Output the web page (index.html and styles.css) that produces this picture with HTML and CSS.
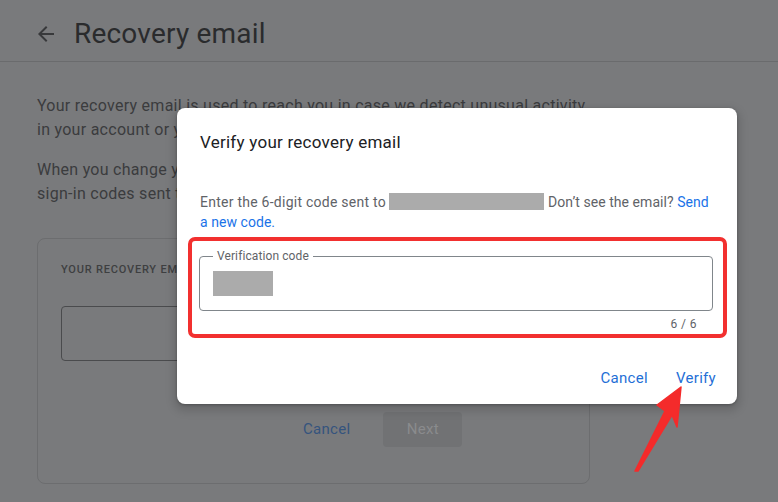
FILE: index.html
```html
<!DOCTYPE html>
<html lang="en">
<head>
<meta charset="utf-8">
<title>Recovery email</title>
<link rel="stylesheet" href="styles.css">
</head>
<body>
<div class="page">
  <header class="topbar">
    <svg class="back" viewBox="0 0 24 24" width="24" height="24" aria-hidden="true"><path d="M20 11H7.83l5.59-5.59L12 4l-8 8 8 8 1.41-1.41L7.83 13H20v-2z"/></svg>
    <h1 class="page-title">Recovery email</h1>
  </header>
  <main class="content">
    <p class="lead">Your recovery email is used to reach you in case we detect unusual activity<br>in your account or you accidentally get locked out.</p>
    <p class="lead lead-last">When you change your recovery email, you'll stop getting security alerts and<br>sign-in codes sent to the old address.</p>
    <section class="card">
      <div class="card-label">Your recovery email</div>
      <div class="card-input"></div>
      <div class="card-actions">
        <span class="page-btn">Cancel</span>
        <span class="page-btn-disabled">Next</span>
      </div>
    </section>
  </main>
</div>

<div class="dialog" role="dialog">
  <h2 class="dialog-title">Verify your recovery email</h2>
  <p class="dialog-body"><span class="wide">Enter the 6-digit code sent to</span> <span class="redacted"></span> Don’t see the email? <a class="link">Send a new code.</a></p>
  <div class="field-wrap">
    <div class="highlight"></div>
    <div class="field">
      <span class="field-label">Verification code</span>
      <span class="redacted-code"></span>
    </div>
    <div class="counter">6 / 6</div>
  </div>
  <div class="actions">
    <span class="dlg-btn">Cancel</span>
    <span class="dlg-btn">Verify</span>
  </div>
</div>

<svg class="pointer" viewBox="0 0 56 95" width="56" height="95" aria-hidden="true">
  <polygon points="51,5 27,23 35,29 5,89 8,89 42,33 47,45" />
</svg>
</body>
</html>
```

FILE: styles.css
```css
html, body {
  margin: 0;
  padding: 0;
}

body {
  width: 778px;
  height: 502px;
  overflow: hidden;
  position: relative;
  background: #797a7c;
  font-family: Roboto, "Liberation Sans", Arial, sans-serif;
}

.topbar {
  display: flex;
  align-items: center;
  gap: 16px;
  height: 36px;
  padding: 16px 0 9px 34px;
  border-bottom: 1px solid #6a6b6d;
}

.back {
  fill: #38393b;
  flex: none;
}

.page-title {
  margin: 0;
  font-size: 28px;
  font-weight: 400;
  line-height: 36px;
  letter-spacing: 0.2px;
  color: #2a2b2d;
}

.content {
  padding: 32px 0 0 37px;
}

.lead {
  margin: 0 0 16px;
  font-size: 16px;
  line-height: 24px;
  letter-spacing: 0.27px;
  color: #3b3c3e;
  white-space: nowrap;
}

.lead-last {
  margin-bottom: 32px;
}

.card {
  width: 553px;
  height: 246px;
  box-sizing: border-box;
  border: 1px solid #6c6d6f;
  border-radius: 8px;
  padding: 23px 23px 0;
}

.card-label {
  font-size: 11px;
  line-height: 16px;
  font-weight: 500;
  letter-spacing: 0.8px;
  text-transform: uppercase;
  color: #3e3f41;
}

.card-input {
  margin-top: 28px;
  height: 55px;
  box-sizing: border-box;
  border: 1px solid #4a4b4d;
  border-radius: 4px;
}

.card-actions {
  display: flex;
  align-items: center;
  gap: 17px;
  margin: 50px 0 0 226px;
}

.page-btn {
  padding: 0 16px;
  line-height: 36px;
  font-size: 15px;
  font-weight: 400;
  letter-spacing: 0.3px;
  color: #35547e;
}

.page-btn-disabled {
  width: 79px;
  height: 35px;
  display: flex;
  align-items: center;
  justify-content: center;
  border-radius: 4px;
  background: #717274;
  font-size: 15px;
  font-weight: 400;
  letter-spacing: 0.3px;
  color: #8a8b8d;
}

/* dialog */
.dialog {
  position: absolute;
  left: 177px;
  top: 108px;
  width: 560px;
  box-sizing: border-box;
  padding: 24px 0 8px;
  background: #fff;
  border-radius: 8px;
  box-shadow: 0 4px 10px 3px rgba(0, 0, 0, 0.14), 0 1px 3px rgba(0, 0, 0, 0.25);
}

.dialog-title {
  margin: 0 24px 0 23px;
  font-size: 17px;
  font-weight: 400;
  line-height: 20px;
  letter-spacing: 0.25px;
  color: #202124;
}

.dialog-body {
  margin: 40px 22px 0 23px;
  font-size: 14px;
  line-height: 20px;
  letter-spacing: 0.05px;
  color: #5f6368;
}

.wide {
  letter-spacing: 0.25px;
}

.redacted {
  display: inline-block;
  width: 155px;
  height: 17px;
  vertical-align: -3px;
  background: #ababab;
}

.link {
  color: #1a73e8;
  text-decoration: none;
}

.field-wrap {
  position: relative;
  margin: 24px 24px 0 22px;
}

.highlight {
  position: absolute;
  left: -11px;
  right: -14px;
  top: -19px;
  bottom: -6px;
  border: 4px solid #f2302f;
  border-radius: 7px;
  pointer-events: none;
}

.field {
  position: relative;
  height: 55px;
  box-sizing: border-box;
  padding: 14px 0 0 13px;
  border: 1px solid #80868b;
  border-radius: 4px;
}

.field-label {
  position: absolute;
  left: 13px;
  top: -9px;
  padding: 0 4px;
  background: #fff;
  font-size: 12px;
  line-height: 16px;
  letter-spacing: 0.1px;
  color: #5f6368;
}

.redacted-code {
  display: block;
  width: 60px;
  height: 25px;
  background: #ababab;
}

.counter {
  margin-top: 5px;
  padding-right: 16px;
  text-align: right;
  font-size: 12px;
  line-height: 16px;
  letter-spacing: 0.4px;
  color: #5f6368;
}

.actions {
  display: flex;
  justify-content: flex-end;
  gap: 12px;
  margin-top: 28px;
  padding-right: 13px;
}

.dlg-btn {
  padding: 0 8px;
  line-height: 36px;
  font-size: 15px;
  font-weight: 400;
  letter-spacing: 0.3px;
  color: #1f6fd6;
}

.pointer {
  position: absolute;
  left: 630px;
  top: 382px;
  fill: #f42b2b;
  stroke: #f42b2b;
  stroke-width: 1.5;
  stroke-linejoin: round;
}
```
